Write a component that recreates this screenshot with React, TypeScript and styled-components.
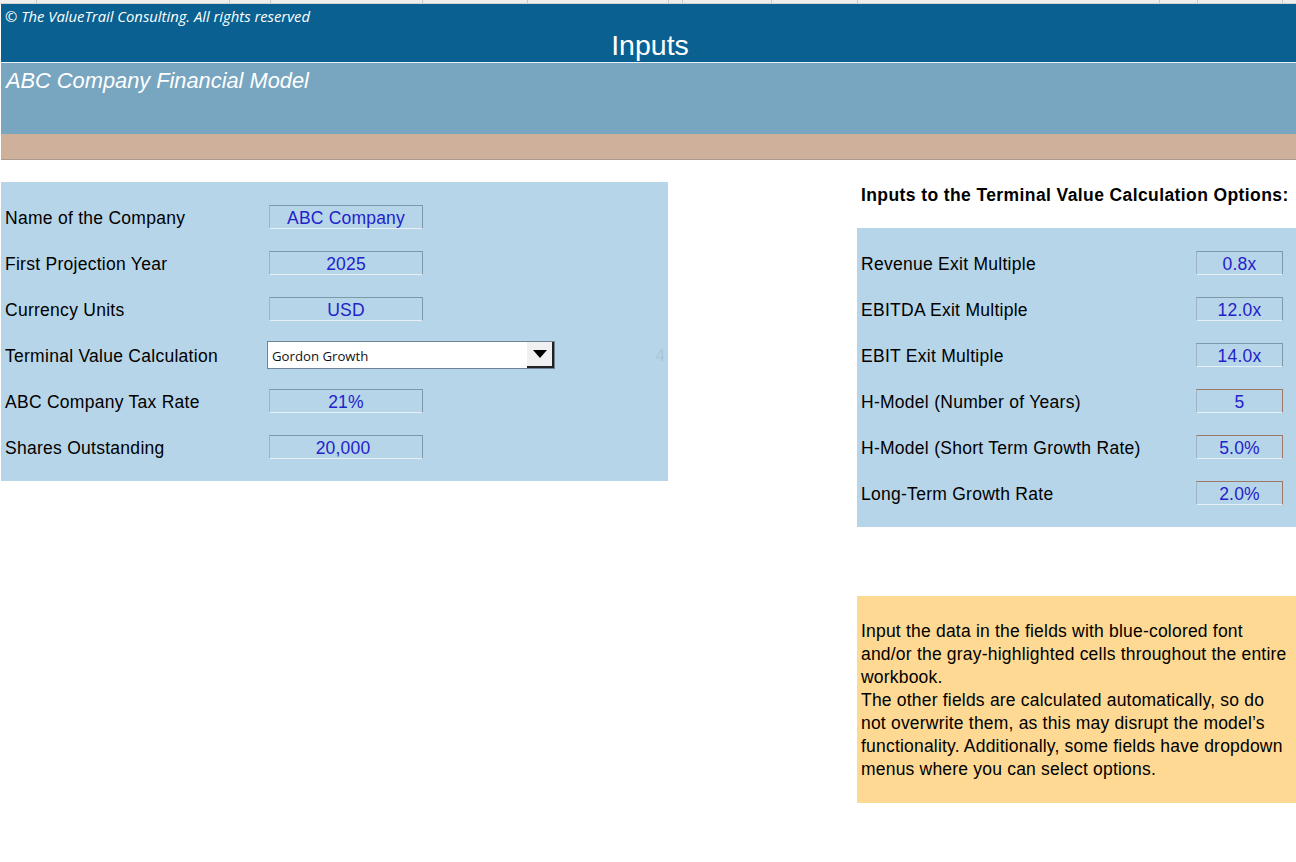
import {FC} from 'react';
import styled, {createGlobalStyle} from 'styled-components';

const COLORS = {
  navy: '#0a6090',
  steel: '#78a5c0',
  tan: '#ceb09b',
  panel: '#b7d5e8',
  note: '#fed993',
  input: '#2222cc',
};

const COLUMN_TICKS = [36, 229, 270, 422, 527, 668, 682, 771, 857, 1159, 1197, 1282];

const GENERAL_ROWS = [
  {label: 'Name of the Company', value: 'ABC Company'},
  {label: 'First Projection Year', value: '2025'},
  {label: 'Currency Units', value: 'USD'},
  {label: 'Terminal Value Calculation', select: 'Gordon Growth'},
  {label: 'ABC Company Tax Rate', value: '21%'},
  {label: 'Shares Outstanding', value: '20,000', inset: 6},
];

const TERMINAL_ROWS = [
  {label: 'Revenue Exit Multiple', value: '0.8x'},
  {label: 'EBITDA Exit Multiple', value: '12.0x'},
  {label: 'EBIT Exit Multiple', value: '14.0x'},
  {label: 'H-Model (Number of Years)', value: '5', warm: true},
  {label: 'H-Model (Short Term Growth Rate)', value: '5.0%', warm: true},
  {label: 'Long-Term Growth Rate', value: '2.0%', warm: true},
];

const ComboBox: FC<{value: string}> = ({value}) => (
  <Combo>
    <ComboValue>{value}</ComboValue>
    <ComboButton>
      <svg width='14' height='8' viewBox='0 0 14 8'>
        <path d='M0 0h14L7 8z' fill='#000' />
      </svg>
    </ComboButton>
  </Combo>
);

const App: FC = () => (
  <>
    <GlobalStyle />
    <Ruler>
      {COLUMN_TICKS.map((x) => (
        <Tick key={x} style={{left: x}} />
      ))}
    </Ruler>
    <Banner>
      <Copyright>© The ValueTrail Consulting. All rights reserved</Copyright>
      <PageTitle>Inputs</PageTitle>
    </Banner>
    <SubBanner>
      <ModelName>ABC Company Financial Model</ModelName>
    </SubBanner>
    <TanBand />
    <Content>
      <LeftColumn>
        <Panel>
          {GENERAL_ROWS.map((row) => (
            <Row key={row.label}>
              <Label $width={264}>{row.label}</Label>
              {row.select ? (
                <ComboBox value={row.select} />
              ) : (
                <Field $width={154} $inset={row.inset}>
                  {row.value}
                </Field>
              )}
            </Row>
          ))}
          <FaintDigit>4</FaintDigit>
        </Panel>
      </LeftColumn>
      <RightColumn>
        <SectionTitle>Inputs to the Terminal Value Calculation Options:</SectionTitle>
        <Panel>
          {TERMINAL_ROWS.map((row) => (
            <Row key={row.label}>
              <Label $width={335}>{row.label}</Label>
              <Field $width={87} $warm={row.warm}>
                {row.value}
              </Field>
            </Row>
          ))}
        </Panel>
        <Note>
          Input the data in the fields with blue-colored font and/or the gray-highlighted cells
          throughout the entire workbook.
          <br />
          The other fields are calculated automatically, so do not overwrite them, as this may
          disrupt the model’s functionality. Additionally, some fields have dropdown menus where
          you can select options.
        </Note>
      </RightColumn>
    </Content>
  </>
);

const GlobalStyle = createGlobalStyle`
  html, body {
    margin: 0;
    background: #fff;
    font-family: 'Liberation Sans', Arial, sans-serif;
    overflow: hidden;
  }
`;

const Ruler = styled.div`
  position: relative;
  height: 3px;
  background: #eeeeee;
  border-bottom: 1px solid #d4d4d4;
`;

const Tick = styled.span`
  position: absolute;
  top: 0;
  width: 1px;
  height: 3px;
  background: #c8c8c8;
`;

const Banner = styled.header`
  margin-left: 1px;
  height: 58px;
  display: flex;
  flex-direction: column;
  background: ${COLORS.navy};
  color: #fff;
  border-bottom: 1px solid #e8f0f4;
`;

const Copyright = styled.div`
  padding: 3px 0 0 4px;
  font-family: 'Open Sans', sans-serif;
  font-size: 14.8px;
  font-style: italic;
  line-height: 18px;
`;

const PageTitle = styled.h1`
  margin: 5px 0 0;
  padding-left: 3px;
  font-size: 28.5px;
  font-weight: 400;
  line-height: 30px;
  text-align: center;
`;

const SubBanner = styled.div`
  margin-left: 1px;
  height: 71px;
  padding: 5px 0 0 5px;
  box-sizing: border-box;
  background: ${COLORS.steel};
`;

const ModelName = styled.div`
  color: #fff;
  font-size: 21.8px;
  font-style: italic;
  line-height: 26px;
`;

const TanBand = styled.div`
  margin-left: 1px;
  height: 25px;
  background: ${COLORS.tan};
  border-bottom: 1px solid #a89a90;
`;

const Content = styled.main`
  display: flex;
  justify-content: space-between;
  padding: 22px 0 0 1px;
`;

const LeftColumn = styled.section`
  width: 667px;
`;

const RightColumn = styled.section`
  width: 439px;
`;

const Panel = styled.div`
  position: relative;
  padding: 13px 0 10px 4px;
  background: ${COLORS.panel};
`;

const Row = styled.div`
  display: flex;
  align-items: center;
  height: 46px;
`;

const Label = styled.div<{$width: number}>`
  flex: 0 0 ${({$width}) => $width}px;
  color: #000;
  font-size: 17.5px;
  letter-spacing: 0.27px;
  white-space: nowrap;
`;

const Field = styled.div<{$width: number; $warm?: boolean; $inset?: number}>`
  box-sizing: border-box;
  width: ${({$width}) => $width}px;
  height: 24px;
  margin-bottom: 2px;
  padding-right: ${({$inset}) => $inset ?? 0}px;
  color: ${COLORS.input};
  font-size: 17.5px;
  letter-spacing: 0.2px;
  line-height: 25px;
  text-align: center;
  border-style: solid;
  border-width: 1px;
  border-color: ${({$warm}) => ($warm ? '#9c7868' : '#7f98a8')};
  border-left-color: #9cb4c4;
  border-bottom-color: #e6f0f6;
`;

const Combo = styled.div`
  box-sizing: border-box;
  display: flex;
  align-items: stretch;
  width: 288px;
  height: 28px;
  margin: 0 0 2px -2px;
  background: #fff;
  border: 1px solid #6f8494;
`;

const ComboValue = styled.div`
  flex: 1;
  padding-left: 4px;
  color: #111;
  font-family: 'Open Sans', sans-serif;
  font-size: 13.2px;
  line-height: 28px;
`;

const ComboButton = styled.div`
  box-sizing: border-box;
  width: 27px;
  display: flex;
  align-items: center;
  justify-content: center;
  background: #f0f0f0;
  border-right: 2px solid #222;
  border-bottom: 2px solid #222;
`;

const FaintDigit = styled.span`
  position: absolute;
  top: 164px;
  right: 3px;
  color: #a9c6d9;
  font-size: 17px;
`;

const SectionTitle = styled.h2`
  margin: 0;
  height: 46px;
  padding: 2px 0 0 4px;
  box-sizing: border-box;
  color: #000;
  font-size: 17.5px;
  font-weight: 700;
  letter-spacing: 0.4px;
  line-height: 22px;
  white-space: nowrap;
`;

const Note = styled.div`
  box-sizing: border-box;
  height: 207px;
  margin-top: 69px;
  padding: 24px 4px 0;
  background: ${COLORS.note};
  color: #000;
  font-size: 17.5px;
  letter-spacing: 0.2px;
  line-height: 23px;
`;

export default App;
